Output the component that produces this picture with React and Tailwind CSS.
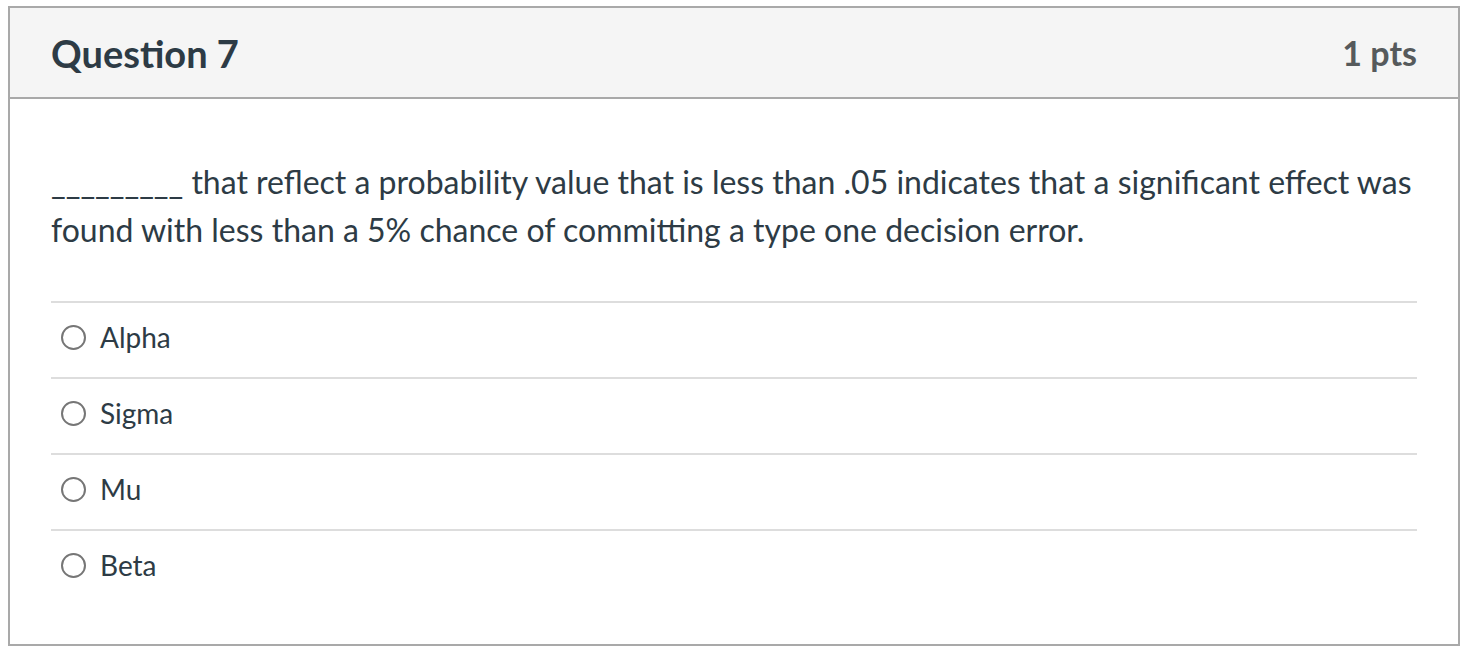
const answers = ["Alpha", "Sigma", "Mu", "Beta"];

function Radio() {
  return <span className="h-[25px] w-[25px] shrink-0 rounded-full border-2 border-[#767676] bg-white" />;
}

export default function App() {
  return (
    <div className="min-h-screen bg-white pl-2 pt-[6px] font-['Lato','Liberation_Sans',sans-serif] text-[#2d3b45]">
      <div className="w-[1452px] border-2 border-[#a9a9a9]">
        <div className="flex h-[91px] items-center justify-between border-b-2 border-[#a9a9a9] bg-[#f5f5f5] px-[41px]">
          <h2 className="text-[38px] font-bold leading-none">Question 7</h2>
          <span className="text-[34px] font-bold leading-none text-[#565a5c]">1 pts</span>
        </div>
        <div className="px-[41px] pb-[39px] pt-[59px]">
          <p className="text-[32px] leading-[48px]">
            _________ that reflect a probability value that is less than .05 indicates that a significant effect was found
            with less than a 5% chance of committing a type one decision error.
          </p>
          <div className="mt-[47px]">
            {answers.map((a) => (
              <div key={a} className="flex h-[76px] items-center gap-[14px] border-t-2 border-[#dddddd] pb-[6px] pl-[10px]">
                <Radio />
                <span className="text-[28px] leading-none">{a}</span>
              </div>
            ))}
          </div>
        </div>
      </div>
    </div>
  );
}
